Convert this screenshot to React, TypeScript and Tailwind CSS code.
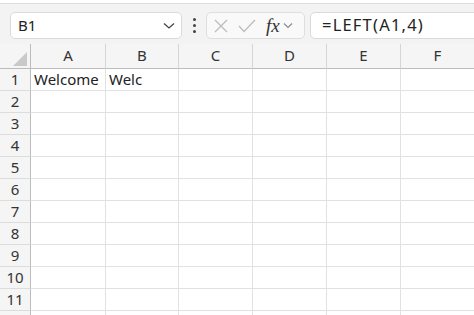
import React from "react";

const cols = ["A", "B", "C", "D", "E", "F"];
const widths = ["w-[75px]", "w-[73px]", "w-[74px]", "w-[74px]", "w-[74px]", "w-[74px]"];
const rows = [1, 2, 3, 4, 5, 6, 7, 8, 9, 10, 11, 12];

export default function App() {
  return (
    <div
      className="w-[474px] h-[315px] overflow-hidden bg-white text-[#222]"
      style={{ fontFamily: '"Noto Sans", "Open Sans", sans-serif' }}
    >
      <div className="h-[3px] bg-white" />
      <div className="h-[41px] bg-[#f3f3f3] border-t border-[#dedede] flex items-start pt-[8px]">
        <div className="ml-[10px] w-[172px] h-[27px] bg-white border border-[#dadada] rounded-[5px] flex items-center pl-[7px] pr-[6px] shrink-0">
          <span className="text-[15px] leading-none flex-1">B1</span>
          <svg width="12" height="8" viewBox="0 0 12 8" className="text-[#444]">
            <path d="M1 1.5 L6 6 L11 1.5" fill="none" stroke="currentColor" strokeWidth="1.3" />
          </svg>
        </div>
        <div className="w-[24px] h-[27px] flex flex-col items-center justify-center gap-[3px] shrink-0">
          <div className="w-[3px] h-[3px] rounded-full bg-[#444]" />
          <div className="w-[3px] h-[3px] rounded-full bg-[#444]" />
          <div className="w-[3px] h-[3px] rounded-full bg-[#444]" />
        </div>
        <div className="w-[99px] h-[27px] bg-[#f9f9f9] border border-[#dedede] rounded-[5px] flex items-center shrink-0">
          <svg width="16" height="16" viewBox="0 0 16 16" className="ml-[6px] text-[#bdbdbd]">
            <path d="M2 2 L14 14 M14 2 L2 14" stroke="currentColor" strokeWidth="1.3" fill="none" />
          </svg>
          <svg width="18" height="16" viewBox="0 0 18 16" className="ml-[9px] text-[#bdbdbd]">
            <path d="M1 8 L6 13.5 L17 2" stroke="currentColor" strokeWidth="1.3" fill="none" />
          </svg>
          <span
            className="ml-[10px] text-[19px] italic leading-none text-[#333]"
            style={{ fontFamily: '"Liberation Serif", "DejaVu Serif", serif' }}
          >
            fx
          </span>
          <svg width="10" height="7" viewBox="0 0 10 7" className="ml-[3px] text-[#888]">
            <path d="M1 1.5 L5 5.5 L9 1.5" fill="none" stroke="currentColor" strokeWidth="1.1" />
          </svg>
        </div>
        <div className="ml-[5px] w-[180px] h-[27px] bg-white border border-[#dadada] rounded-l-[5px] flex items-center pl-[11px] shrink-0">
          <span className="text-[16.5px] leading-none tracking-[1.2px]">=LEFT(A1,4)</span>
        </div>
      </div>

      <div className="flex h-[25px] bg-[#f5f5f5]">
        <div className="w-[31px] h-[25px] border-r border-b border-[#bcbcbc] relative shrink-0">
          <svg width="14" height="14" viewBox="0 0 14 14" className="absolute left-[13px] top-[8px]">
            <path d="M14 0 L14 14 L0 14 Z" fill="#c9c9c9" />
          </svg>
        </div>
        {cols.map((c, i) => (
          <div
            key={c}
            className={`${widths[i]} h-[25px] border-r border-b border-r-[#d6d6d6] border-b-[#bcbcbc] flex items-end justify-center pb-[2px] text-[15px] text-[#333] shrink-0`}
          >
            {c}
          </div>
        ))}
      </div>

      {rows.map((r) => (
        <div key={r} className="flex h-[22px]">
          <div className="w-[31px] h-[22px] bg-[#f5f5f5] border-r border-b border-r-[#bcbcbc] border-b-[#dcdcdc] flex items-center justify-center text-[15px] text-[#333] shrink-0">
            {r <= 11 ? r : ""}
          </div>
          {cols.map((c, i) => (
            <div
              key={c}
              className={`${widths[i]} h-[22px] border-r border-b border-[#e1e1e1] flex items-center pl-[3px] text-[15px] shrink-0`}
            >
              {r === 1 && c === "A" ? "Welcome" : r === 1 && c === "B" ? "Welc" : ""}
            </div>
          ))}
        </div>
      ))}
    </div>
  );
}
